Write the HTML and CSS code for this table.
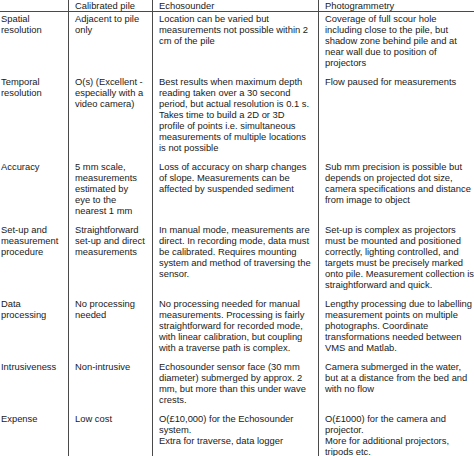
FILE: index.html
```html
<!DOCTYPE html>
<html lang="en">
<head>
<meta charset="utf-8">
<title>Comparison of measurement methods</title>
<link rel="stylesheet" href="styles.css">
</head>
<body>
<div class="table">
  <div class="cell head first"></div>
  <div class="cell head">Calibrated pile</div>
  <div class="cell head">Echosounder</div>
  <div class="cell head">Photogrammetry</div>

  <div class="cell first">Spatial<br>resolution</div>
  <div class="cell">Adjacent to pile<br>only</div>
  <div class="cell">Location can be varied but<br>measurements not possible within 2<br>cm of the pile</div>
  <div class="cell">Coverage of full scour hole<br>including close to the pile, but<br>shadow zone behind pile and at<br>near wall due to position of<br>projectors</div>

  <div class="cell first">Temporal<br>resolution</div>
  <div class="cell">O(s) (Excellent -<br>especially with a<br>video camera)</div>
  <div class="cell">Best results when maximum depth<br>reading taken over a 30 second<br>period, but actual resolution is 0.1 s.<br>Takes time to build a 2D or 3D<br>profile of points i.e. simultaneous<br>measurements of multiple locations<br>is not possible</div>
  <div class="cell">Flow paused for measurements</div>

  <div class="cell first">Accuracy</div>
  <div class="cell">5 mm scale,<br>measurements<br>estimated by<br>eye to the<br>nearest 1 mm</div>
  <div class="cell">Loss of accuracy on sharp changes<br>of slope. Measurements can be<br>affected by suspended sediment</div>
  <div class="cell">Sub mm precision is possible but<br>depends on projected dot size,<br>camera specifications and distance<br>from image to object</div>

  <div class="cell first">Set-up and<br>measurement<br>procedure</div>
  <div class="cell">Straightforward<br>set-up and direct<br>measurements</div>
  <div class="cell">In manual mode, measurements are<br>direct. In recording mode, data must<br>be calibrated. Requires mounting<br>system and method of traversing the<br>sensor.</div>
  <div class="cell">Set-up is complex as projectors<br>must be mounted and positioned<br>correctly, lighting controlled, and<br>targets must be precisely marked<br>onto pile. Measurement collection is<br>straightforward and quick.</div>

  <div class="cell first">Data<br>processing</div>
  <div class="cell">No processing<br>needed</div>
  <div class="cell">No processing needed for manual<br>measurements. Processing is fairly<br>straightforward for recorded mode,<br>with linear calibration, but coupling<br>with a traverse path is complex.</div>
  <div class="cell">Lengthy processing due to labelling<br>measurement points on multiple<br>photographs. Coordinate<br>transformations needed between<br>VMS and Matlab.</div>

  <div class="cell first">Intrusiveness</div>
  <div class="cell">Non-intrusive</div>
  <div class="cell">Echosounder sensor face (30 mm<br>diameter) submerged by approx. 2<br>mm, but more than this under wave<br>crests.</div>
  <div class="cell">Camera submerged in the water,<br>but at a distance from the bed and<br>with no flow</div>

  <div class="cell first">Expense</div>
  <div class="cell">Low cost</div>
  <div class="cell">O(£10,000) for the Echosounder<br>system.<br>Extra for traverse, data logger</div>
  <div class="cell">O(£1000) for the camera and<br>projector.<br>More for additional projectors,<br>tripods etc.</div>
</div>
</body>
</html>
```

FILE: styles.css
```css
html, body {
  margin: 0;
  padding: 0;
  background: #ffffff;
}

body {
  width: 474px;
  height: 456px;
  overflow: hidden;
  font-family: "Liberation Sans", Arial, sans-serif;
  font-size: 9.4px;
  line-height: 11px;
  color: #1a1a1a;
}

.table {
  display: grid;
  grid-template-columns: 68px 84px 166px 1fr;
  width: 474px;
}

.cell {
  white-space: nowrap;
  border-left: 1px solid #4a4a4a;
  padding: 1px 0 7px 6px;
}

.cell.first {
  border-left: none;
  padding-left: 1px;
}

.cell.head {
  padding-top: 0;
  padding-bottom: 0;
  border-bottom: 1px solid #4a4a4a;
}
```
